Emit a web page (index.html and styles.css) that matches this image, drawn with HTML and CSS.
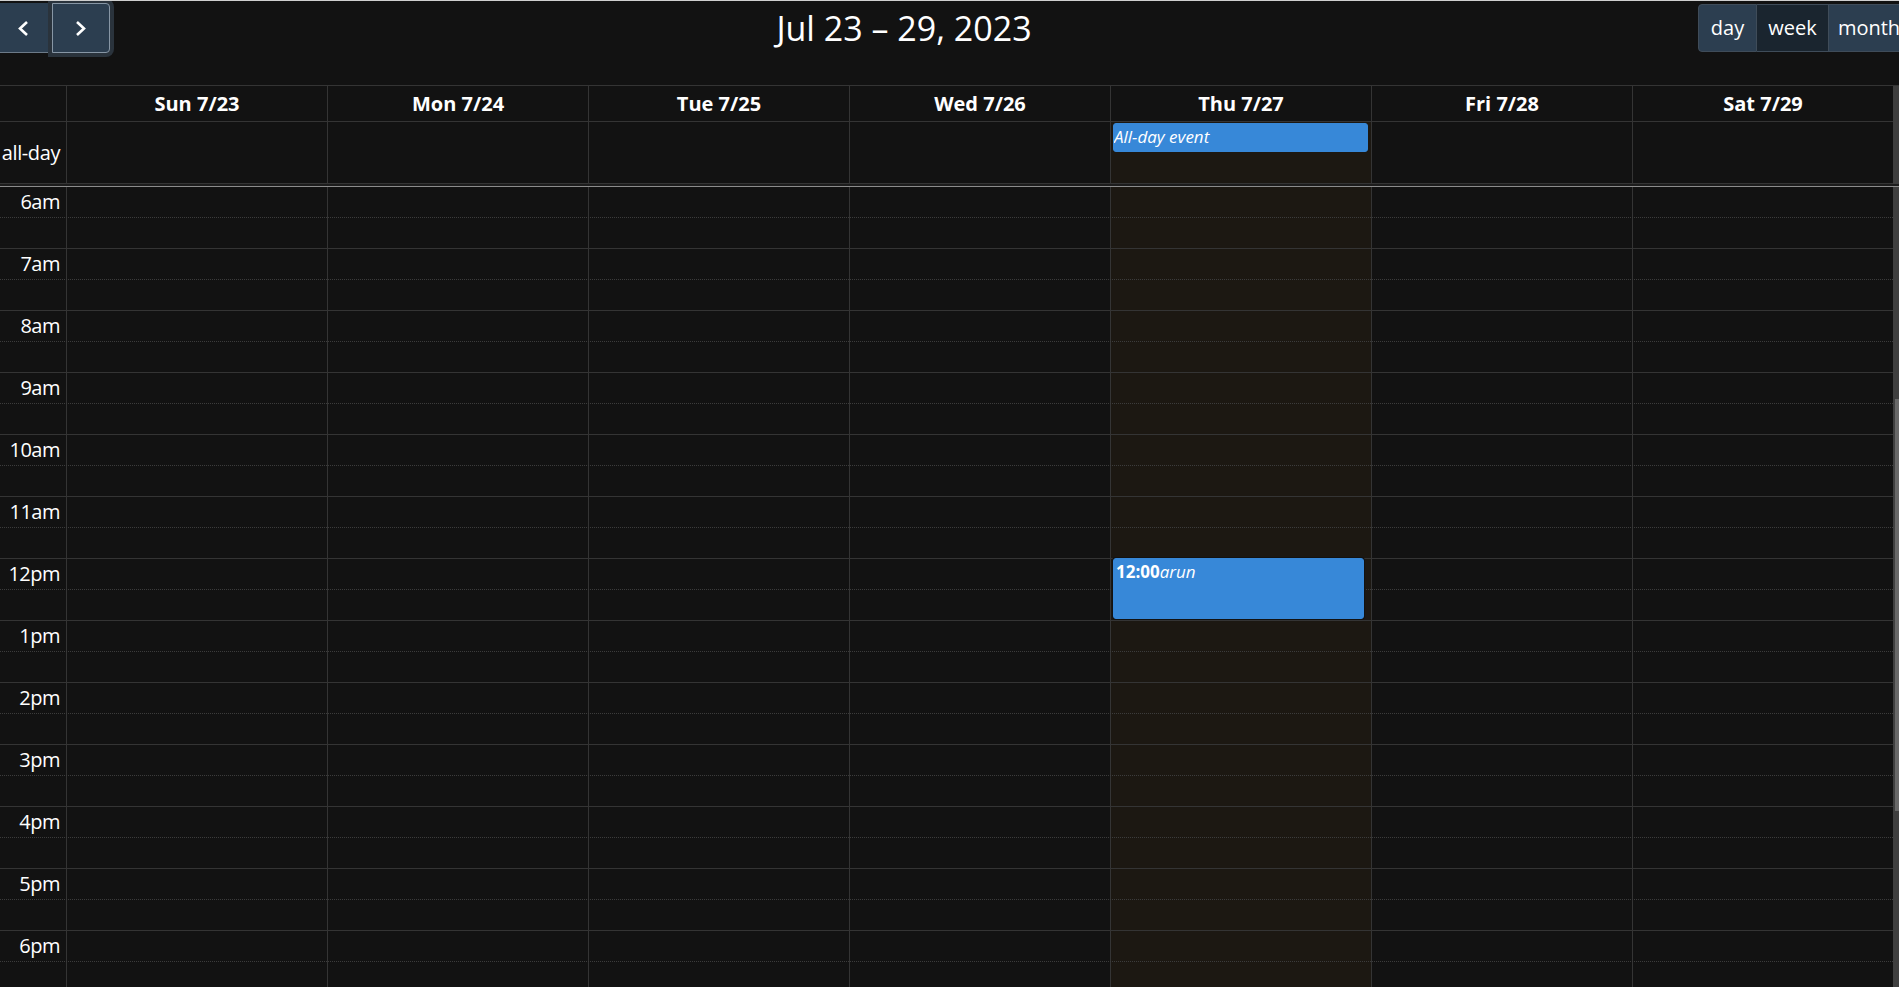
FILE: index.html
```html
<!DOCTYPE html>
<html lang="en">
<head>
<meta charset="utf-8">
<title>Calendar</title>
<link rel="stylesheet" href="styles.css">
</head>
<body>
<div class="topline"></div>
<div class="cal">
  <div class="toolbar">
    <div class="btn-group">
      <button class="btn nav prev" aria-label="prev"><svg viewBox="0 0 12 17"><polyline points="10,2 3,8.5 10,15"/></svg></button>
      <button class="btn nav next" aria-label="next"><svg viewBox="0 0 12 17"><polyline points="2,2 9,8.5 2,15"/></svg></button>
    </div>
    <h2 class="title">Jul 23 – 29, 2023</h2>
    <div class="btn-group">
      <button class="btn view day">day</button>
      <button class="btn view week">week</button>
      <button class="btn view month">month</button>
    </div>
  </div>

  <div class="head">
    <div class="head-grid">
      <div class="hcell axis"></div>
      <div class="hcell">Sun 7/23</div>
      <div class="hcell">Mon 7/24</div>
      <div class="hcell">Tue 7/25</div>
      <div class="hcell">Wed 7/26</div>
      <div class="hcell">Thu 7/27</div>
      <div class="hcell">Fri 7/28</div>
      <div class="hcell">Sat 7/29</div>

      <div class="acell axis">all-day</div>
      <div class="acell"></div>
      <div class="acell"></div>
      <div class="acell"></div>
      <div class="acell"></div>
      <div class="acell today"><div class="ev allday-ev">All-day event</div></div>
      <div class="acell"></div>
      <div class="acell"></div>
    </div>
    <div class="gutter"></div>
  </div>

  <div class="divider"></div>

  <div class="body">
    <div class="tgrid">
      <div class="cols">
        <div class="axis-col"></div>
        <div class="col"></div>
        <div class="col"></div>
        <div class="col"></div>
        <div class="col"></div>
        <div class="col today"></div>
        <div class="col"></div>
        <div class="col"></div>
      </div>

      <div class="slots">
        <div class="slot"><div class="slot-label">6am</div></div><div class="slot hr-end"></div>
        <div class="slot"><div class="slot-label">7am</div></div><div class="slot hr-end"></div>
        <div class="slot"><div class="slot-label">8am</div></div><div class="slot hr-end"></div>
        <div class="slot"><div class="slot-label">9am</div></div><div class="slot hr-end"></div>
        <div class="slot"><div class="slot-label">10am</div></div><div class="slot hr-end"></div>
        <div class="slot"><div class="slot-label">11am</div></div><div class="slot hr-end"></div>
        <div class="slot"><div class="slot-label">12pm</div></div><div class="slot hr-end"></div>
        <div class="slot"><div class="slot-label">1pm</div></div><div class="slot hr-end"></div>
        <div class="slot"><div class="slot-label">2pm</div></div><div class="slot hr-end"></div>
        <div class="slot"><div class="slot-label">3pm</div></div><div class="slot hr-end"></div>
        <div class="slot"><div class="slot-label">4pm</div></div><div class="slot hr-end"></div>
        <div class="slot"><div class="slot-label">5pm</div></div><div class="slot hr-end"></div>
        <div class="slot"><div class="slot-label">6pm</div></div><div class="slot hr-end"></div>
      </div>

      <div class="events">
        <div class="ev timed" style="margin-top:371px;height:61px"><b>12:00</b><i>arun</i></div>
      </div>
    </div>
    <div class="sb"><div class="thumb"></div></div>
  </div>
</div>
</body>
</html>
```
FILE: styles.css
```css
* { box-sizing: border-box; }

html, body {
  margin: 0;
  height: 100%;
  overflow: hidden;
  background: #121212;
}

body {
  font-family: "Open Sans", "Noto Sans", sans-serif;
  font-size: 20px;
  color: #fff;
}

.topline {
  height: 1px;
  background: #cfcfcf;
  position: relative;
  z-index: 2;
}

.cal {
  width: 1916px;
  margin-left: -6px;
}

/* toolbar */
.toolbar {
  display: flex;
  justify-content: space-between;
  align-items: center;
  height: 50px;
  margin: 2px 0 32px;
}

.btn-group {
  display: flex;
  align-items: center;
}

.btn {
  font: inherit;
  color: #fff;
  background: #2c3e50;
  border: 1px solid #2c3e50;
  margin: 0;
  padding: 0;
  display: flex;
  align-items: center;
  justify-content: center;
}

.nav {
  width: 58px;
  height: 50px;
}

.prev {
  border-radius: 4px 0 0 4px;
  border-bottom-color: #6c7a88;
}

.next {
  border-radius: 0 4px 4px 0;
  border-color: #8796a5;
  box-shadow: 0 0 0 4px #2a333c;
  position: relative;
  z-index: 1;
}

.nav svg {
  width: 12px;
  height: 17px;
  fill: none;
  stroke: #fff;
  stroke-width: 2.6;
}

.title {
  margin: 0;
  font-size: 34px;
  font-weight: 400;
  line-height: 1;
}

.view {
  height: 48px;
  border-color: #3f4c59;
  line-height: 1;
}

.day {
  width: 59px;
  border-radius: 4px 0 0 4px;
}

.week {
  width: 72px;
  background: #1a252f;
  border-left: none;
}

.month {
  width: 81px;
  border-left: none;
  border-radius: 0 4px 4px 0;
}

/* header + all-day */
.head {
  display: flex;
  border-top: 1px solid #343434;
}

.head-grid {
  display: grid;
  grid-template-columns: 72px repeat(7, 261px);
  grid-template-rows: 36px 62px;
}

.hcell {
  border-bottom: 1px solid #343434;
  border-left: 1px solid #343434;
  font-weight: 700;
  text-align: center;
  line-height: 35px;
}

.hcell.axis { border-left: none; }

.acell {
  border-bottom: 1px solid #343434;
  border-left: 1px solid #343434;
}

.acell.axis {
  border-left: none;
  display: flex;
  align-items: center;
  justify-content: flex-end;
  padding-right: 6px;
  letter-spacing: -0.4px;
}

.today { background: #1c1812; }

.gutter {
  width: 17px;
  background: #3e3e3e;
}

.divider {
  height: 3px;
  background: #1c1c1c;
  border-bottom: 1px solid #8c8c8c;
}

/* time grid */
.body {
  display: flex;
  height: 800px;
  overflow: hidden;
}

.tgrid {
  display: grid;
  grid-template-columns: 1899px;
  width: 1899px;
  flex: none;
}

.cols, .slots, .events { grid-area: 1 / 1; }

.cols {
  display: grid;
  grid-template-columns: 72px repeat(7, 261px);
}

.col { border-left: 1px solid #343434; }

.slots {
  display: flex;
  flex-direction: column;
}

.slot {
  height: 31px;
  flex: none;
  border-bottom: 1px dotted #3c3c3c;
  display: flex;
}

.slot.hr-end {
  border-bottom: 1px solid #343434;
}

.slot-label {
  width: 72px;
  text-align: right;
  padding-right: 6px;
  line-height: 30px;
  letter-spacing: -0.5px;
}

.events {
  display: grid;
  grid-template-columns: 72px repeat(7, 261px);
  align-items: start;
}

/* events */
.ev {
  background: #3788d8;
  border: 1px solid #3788d8;
  border-radius: 3px;
  color: #fff;
  font-size: 17px;
  white-space: nowrap;
  overflow: hidden;
}

.allday-ev {
  margin: 1px 3px 0 2px;
  height: 29px;
  line-height: 26px;
  font-style: italic;
  padding: 0;
}

.timed {
  grid-column: 6;
  margin-left: 3px;
  margin-right: 7px;
  padding: 1px 2px;
  line-height: 24px;
  box-shadow: 0 0 0 1px #121212;
}

.timed b { font-weight: 700; }

/* scrollbar */
.sb {
  width: 17px;
  flex: none;
  background: #3f3f3f;
}

.thumb {
  margin: 212px 0 0 2px;
  height: 412px;
  background: #686868;
}
```
